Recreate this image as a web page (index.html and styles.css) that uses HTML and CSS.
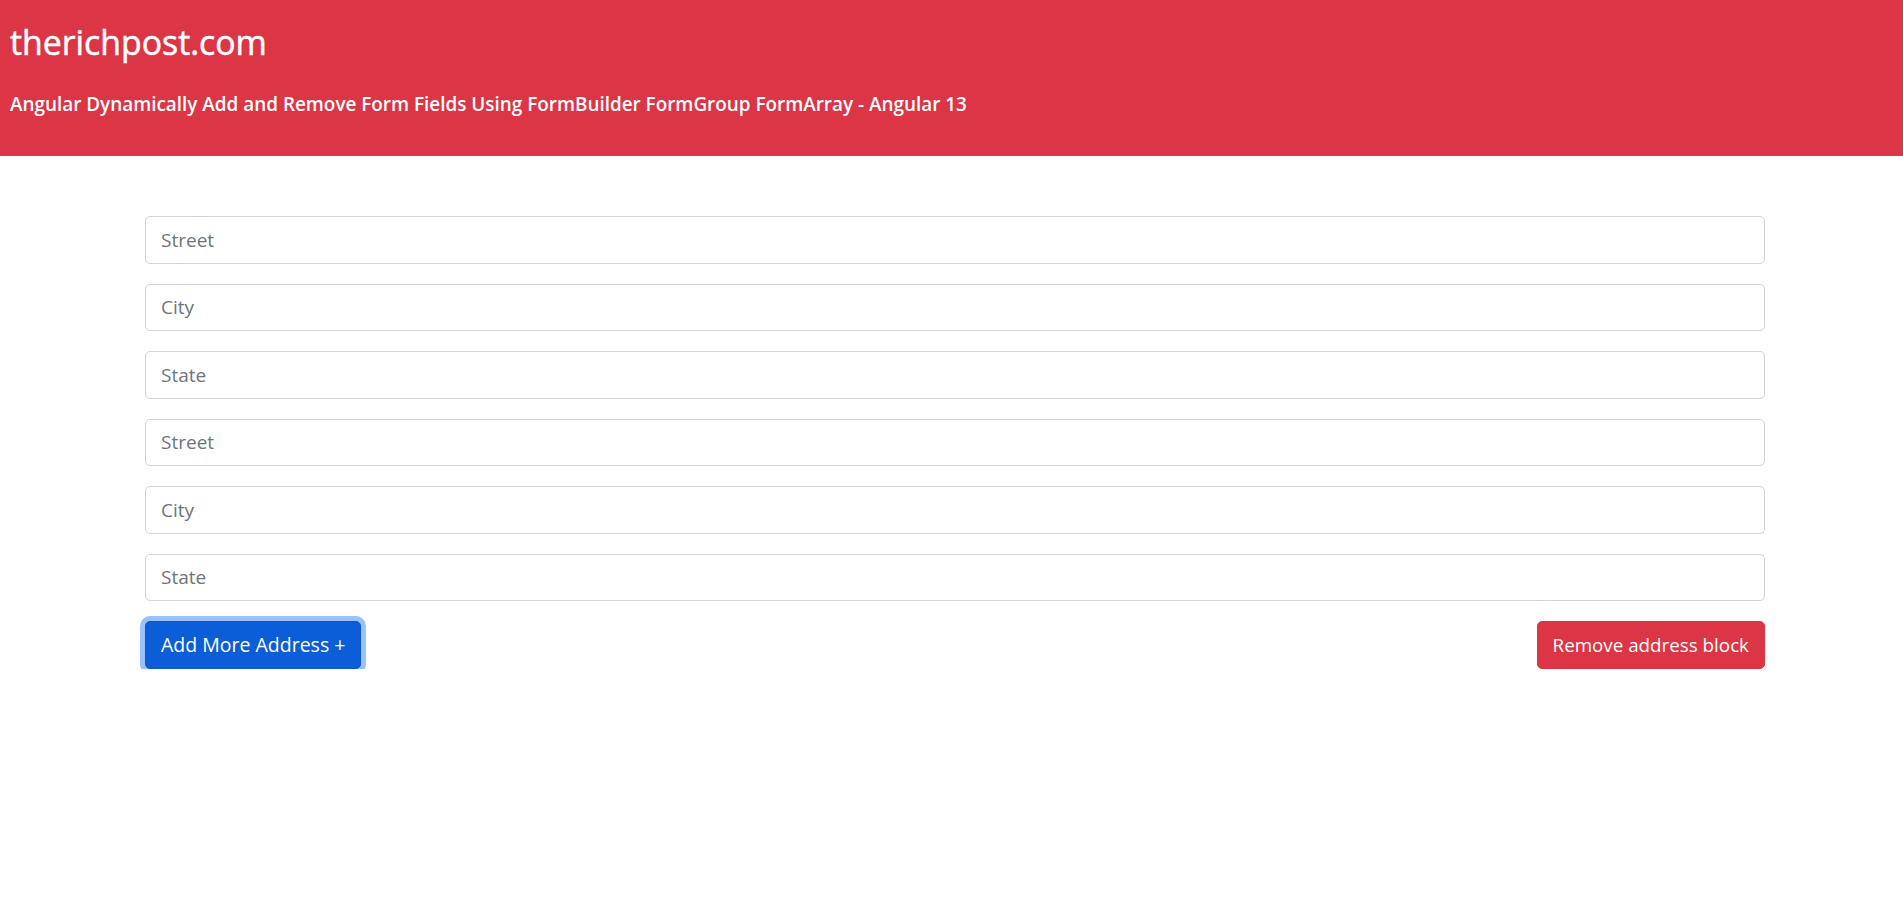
FILE: index.html
```html
<!DOCTYPE html>
<html lang="en">
<head>
<meta charset="utf-8">
<title>therichpost.com</title>
<link rel="stylesheet" href="styles.css">
</head>
<body>
<header class="site-header">
  <h3 class="site-title">therichpost.com</h3>
  <h6 class="site-subtitle">Angular Dynamically Add and Remove Form Fields Using FormBuilder FormGroup FormArray - Angular 13</h6>
</header>
<main class="form-wrap">
  <form class="address-form">
    <input class="field" type="text" placeholder="Street">
    <input class="field" type="text" placeholder="City">
    <input class="field" type="text" placeholder="State">
    <input class="field" type="text" placeholder="Street">
    <input class="field" type="text" placeholder="City">
    <input class="field" type="text" placeholder="State">
    <div class="actions">
      <button type="button" class="btn btn-primary">Add More Address +</button>
      <button type="button" class="btn btn-danger">Remove address block</button>
    </div>
  </form>
</main>
</body>
</html>
```
FILE: styles.css
```css
* { box-sizing: border-box; }
body {
  margin: 0;
  font-family: "Open Sans", "Noto Sans", sans-serif;
  color: #212529;
  background: #fff;
}
.site-header {
  background: #dc3545;
  color: #fff;
  height: 156px;
  padding: 21px 10px 0;
}
.site-title {
  margin: 0 0 29px;
  font-size: 33.8px;
  line-height: 42px;
  font-weight: 400;
  -webkit-text-stroke: 0.5px #fff;
}
.site-subtitle {
  margin: 0;
  font-size: 18.9px;
  line-height: 24px;
  font-weight: 600;
}
.form-wrap {
  width: 1620px;
  margin-left: 145px;
  padding-top: 60px;
}
.address-form {
  display: flex;
  flex-direction: column;
}
.field {
  display: block;
  width: 100%;
  height: 47.5px;
  margin: 0 0 20px;
  padding: 0 15px;
  font-family: inherit;
  font-size: 19px;
  color: #212529;
  background: #fff;
  border: 1px solid #ced4da;
  border-radius: 5px;
  outline: none;
}
.field::placeholder { color: #6c757d; opacity: 1; }
.actions {
  display: flex;
  justify-content: space-between;
  align-items: center;
}
.btn {
  height: 47.5px;
  padding: 0 15px;
  font-family: inherit;
  font-size: 19.5px;
  color: #fff;
  border: 1px solid transparent;
  border-radius: 5px;
  cursor: pointer;
}
.btn-primary {
  background: #0b5ed7;
  border-color: #0a58ca;
  box-shadow: 0 0 0 5px rgba(49, 132, 253, 0.5);
}
.btn-danger {
  font-size: 18.8px;
  background: #dc3545;
  border-color: #dc3545;
}
```
